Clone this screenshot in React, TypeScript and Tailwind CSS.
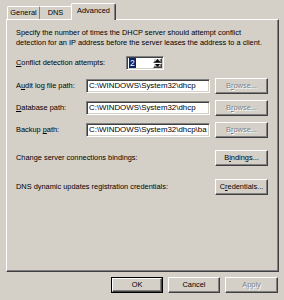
import React from 'react';

const raised =
  'border border-t-white border-l-white border-r-[#404040] border-b-[#404040] shadow-[inset_-1px_-1px_#808080]';
const sunken =
  'border border-t-[#808080] border-l-[#808080] border-r-white border-b-white shadow-[inset_1px_1px_#404040,inset_-1px_-1px_#d4d0c8]';
const disabledText = 'text-[#808080] [text-shadow:1px_1px_#fff]';

function Btn({ children, disabled, isDefault, className = '' }: { children: React.ReactNode; disabled?: boolean; isDefault?: boolean; className?: string }) {
  if (isDefault) {
    return (
      <div className={`border border-black ${className}`}>
        <div className={`h-full flex items-center justify-center ${raised}`}>{children}</div>
      </div>
    );
  }
  return (
    <div className={`flex items-center justify-center ${raised} ${disabled ? disabledText : ''} ${className}`}>
      {children}
    </div>
  );
}

function PathRow({ label, value }: { label: React.ReactNode; value: string }) {
  return (
    <div className="flex items-center h-[16px]">
      <div className="w-[70px]">{label}</div>
      <div className={`w-[124px] h-[14px] bg-white flex items-center pl-[2px] overflow-hidden whitespace-nowrap text-[7.9px] ${sunken}`}>
        {value}
      </div>
      <Btn disabled className="ml-[5px] w-[53px] h-[16px]">
        B<u>r</u>owse...
      </Btn>
    </div>
  );
}

export default function App() {
  return (
    <div className="w-[284px] h-[300px] bg-[#d4d0c8] text-black text-[7.4px] font-['Liberation_Sans',Arial,sans-serif] overflow-hidden">
      {/* Tabs */}
      <div className="flex items-end h-[19px] pl-[7px]">
        <div className="h-[13px] w-[33px] flex items-center justify-center border-t border-l border-t-white border-l-white border-r border-r-[#808080] rounded-t-[2px]">
          General
        </div>
        <div className="h-[13px] w-[31px] flex items-center justify-center border-t border-t-white">
          DNS
        </div>
        <div className="relative z-10 -mb-[1px] h-[17px] w-[45px] flex items-center justify-center bg-[#d4d0c8] border-t border-l border-t-white border-l-white border-r border-r-[#404040] shadow-[inset_-1px_0_#808080] rounded-t-[2px] pb-[2px]">
          Advanced
        </div>
      </div>

      {/* Panel */}
      <div className="ml-[6px] w-[273px] h-[253px] border border-t-white border-l-white border-r-[#404040] border-b-[#404040] shadow-[inset_-1px_-1px_#808080] pl-[9px] pr-[10px] pt-[8px]">
        <p className="leading-[9.5px]">
          Specify the number of times the DHCP server should attempt conflict
          <br />
          detection for an IP address before the server leases the address to a client.
        </p>

        <div className="flex items-center h-[14px] mt-[9px]">
          <div className="w-[110px]">
            <u>C</u>onflict detection attempts:
          </div>
          <div className={`flex h-[14px] w-[38px] bg-white ${sunken}`}>
            <div className="flex-1 flex items-center pl-[2px]">
              <span className="bg-[#0a246a] text-white px-[1px] leading-[10px] text-[8.5px]">2</span>
            </div>
            <div className="w-[10px] flex flex-col py-[1px] pr-[1px]">
              <div className={`flex-1 bg-[#d4d0c8] flex items-center justify-center ${raised}`}>
                <svg width="5" height="3" viewBox="0 0 5 3"><path d="M2.5 0L5 3H0z" fill="#000" /></svg>
              </div>
              <div className={`flex-1 bg-[#d4d0c8] flex items-center justify-center ${raised}`}>
                <svg width="5" height="3" viewBox="0 0 5 3"><path d="M0 0h5L2.5 3z" fill="#000" /></svg>
              </div>
            </div>
          </div>
        </div>

        <div className="mt-[8px] flex flex-col gap-[6px]">
          <PathRow label={<>A<u>u</u>dit log file path:</>} value="C:\WINDOWS\System32\dhcp" />
          <PathRow label={<><u>D</u>atabase path:</>} value="C:\WINDOWS\System32\dhcp" />
          <PathRow label={<>Backup <u>p</u>ath:</>} value="C:\WINDOWS\System32\dhcp\ba" />
        </div>

        <div className="flex items-center justify-between h-[16px] mt-[12px]">
          <span>Change server connections bindings:</span>
          <Btn className="w-[53px] h-[16px]">
            B<u>i</u>ndings...
          </Btn>
        </div>

        <div className="flex items-center justify-between h-[16px] mt-[13px]">
          <span>DNS dynamic updates registration credentials:</span>
          <Btn className="w-[53px] h-[16px]">
            C<u>r</u>edentials...
          </Btn>
        </div>
      </div>

      {/* Dialog buttons */}
      <div className="flex justify-end gap-[5px] pr-[6px] mt-[5px]">
        <Btn isDefault className="w-[52px] h-[16px]">OK</Btn>
        <Btn className="w-[52px] h-[16px]">Cancel</Btn>
        <Btn disabled className="w-[53px] h-[16px]">Apply</Btn>
      </div>
    </div>
  );
}
